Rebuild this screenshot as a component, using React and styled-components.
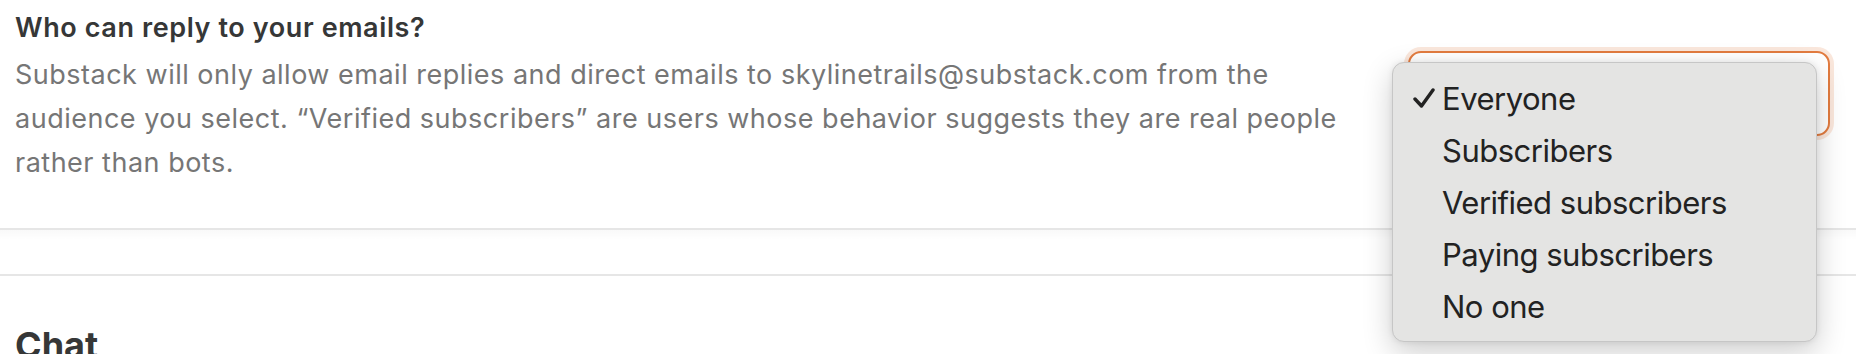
import React from "react";
import styled, { createGlobalStyle } from "styled-components";

const Global = createGlobalStyle`
  html, body { margin: 0; padding: 0; background: #fff; }
  body { font-family: Inter, "Noto Sans", sans-serif; -webkit-font-smoothing: antialiased; }
`;

const Page = styled.div`
  width: 1856px;
  height: 354px;
  overflow: hidden;
`;

const SettingRow = styled.section`
  display: flex;
  justify-content: space-between;
  align-items: flex-start;
  padding: 6px 26px 43px 15px;
`;

const TextBlock = styled.div`
  width: 1340px;
`;

const Title = styled.h3`
  margin: 0 0 3px;
  font-size: 27px;
  line-height: 44px;
  font-weight: 600;
  letter-spacing: 0.6px;
  color: #363737;
`;

const Description = styled.p`
  margin: 0;
  font-size: 27px;
  line-height: 44px;
  font-weight: 400;
  letter-spacing: 0.5px;
  color: #767676;
`;

const SelectWrap = styled.div`
  position: relative;
  margin-top: 45px;
`;

const SelectBox = styled.div`
  width: 418px;
  height: 81px;
  border: 2px solid #e27b3f;
  border-radius: 13px;
  background: #fff;
  box-shadow: 0 0 0 4px rgba(226, 123, 63, 0.18);
`;

const Menu = styled.ul`
  position: absolute;
  left: -16px;
  top: 11px;
  width: 423px;
  margin: 0;
  padding: 9px 0;
  list-style: none;
  background: #e4e4e3;
  border: 1px solid #c6c6c6;
  border-radius: 12px;
  box-shadow: 0 10px 30px rgba(0, 0, 0, 0.2), 0 0 6px rgba(0, 0, 0, 0.08);
`;

const Item = styled.li`
  display: flex;
  align-items: center;
  height: 52px;
  padding-left: 20px;
  font-size: 31px;
  letter-spacing: -0.5px;
  color: #222222;
`;

const CheckSlot = styled.span`
  width: 29px;
  display: inline-flex;
  align-items: center;
`;

const Divider = styled.div`
  height: 44px;
  border-top: 2px solid #e6e6e6;
  border-bottom: 2px solid #e6e6e6;
  background: linear-gradient(rgba(0, 0, 0, 0.025), rgba(0, 0, 0, 0) 10px);
`;

const SectionTitle = styled.h2`
  margin: 47px 0 0 15px;
  font-size: 36px;
  line-height: 44px;
  font-weight: 700;
  color: #363737;
`;

const options = ["Everyone", "Subscribers", "Verified subscribers", "Paying subscribers", "No one"];

const Check = () => (
  <svg width="22" height="20" viewBox="0 0 22 20">
    <path d="M2 11 L8.5 18 L20 2" fill="none" stroke="#222222" strokeWidth="3.4" strokeLinecap="round" strokeLinejoin="round" />
  </svg>
);

export default function App() {
  return (
    <Page>
      <Global />
      <SettingRow>
        <TextBlock>
          <Title>Who can reply to your emails?</Title>
          <Description>
            Substack will only allow email replies and direct emails to skylinetrails@substack.com from the audience you select. “Verified subscribers” are users whose behavior suggests they are real people rather than bots.
          </Description>
        </TextBlock>
        <SelectWrap>
          <SelectBox />
          <Menu>
            {options.map((o, i) => (
              <Item key={o}>
                <CheckSlot>{i === 0 && <Check />}</CheckSlot>
                {o}
              </Item>
            ))}
          </Menu>
        </SelectWrap>
      </SettingRow>
      <Divider />
      <SectionTitle>Chat</SectionTitle>
    </Page>
  );
}
